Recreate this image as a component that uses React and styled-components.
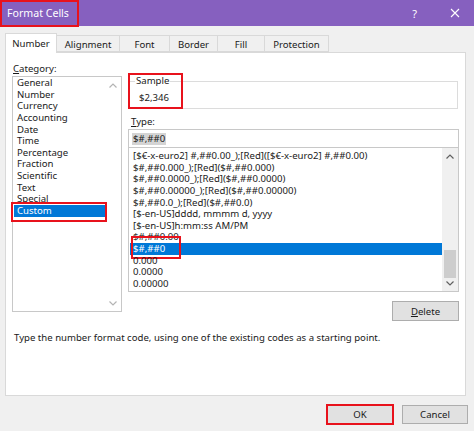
import React from 'react';
import styled, { createGlobalStyle } from 'styled-components';

const GlobalStyle = createGlobalStyle`
  html, body {
    margin: 0;
    padding: 0;
    background: #f0f0f0;
  }
  * {
    box-sizing: border-box;
  }
`;

const Window = styled.div`
  width: 474px;
  height: 431px;
  background: #f0f0f0;
  font-family: "Noto Sans", "Open Sans", sans-serif;
  font-size: 9.6px;
  color: #1a1a1a;
  display: flex;
  flex-direction: column;
  overflow: hidden;
`;

const TitleBar = styled.div`
  height: 26px;
  background: #8660bf;
  color: #fff;
  display: flex;
  align-items: center;
  justify-content: space-between;
  flex-shrink: 0;
`;

const TitleText = styled.div`
  position: relative;
  height: 26px;
  width: 79px;
  display: flex;
  align-items: center;
  padding-left: 7px;
  font-size: 10.6px;
  white-space: nowrap;
`;

const TitleButtons = styled.div`
  display: flex;
  align-items: center;
  gap: 33px;
  padding-right: 14px;
`;

const HelpGlyph = styled.span`
  font-size: 11px;
  color: #fff;
`;

// red annotation frames drawn over the screenshot
const Mark = styled.span`
  position: absolute;
  border: 2px solid #e8121c;
  pointer-events: none;
`;

const Body = styled.div`
  flex: 1;
  display: flex;
  flex-direction: column;
  padding: 7px 8px 0 5px;
`;

const Tabs = styled.div`
  display: flex;
  align-items: flex-end;
  height: 19px;
`;

const Tab = styled.div`
  width: ${p => p.$w}px;
  height: ${p => (p.$active ? 20 : 17)}px;
  display: flex;
  align-items: center;
  justify-content: center;
  background: ${p => (p.$active ? '#fff' : '#f0f0f0')};
  border: 1px solid #d9d9d9;
  border-bottom: ${p => (p.$active ? 'none' : '1px solid #d9d9d9')};
  border-left: ${p => (p.$first || p.$active ? '1px solid #d9d9d9' : 'none')};
  margin-bottom: ${p => (p.$active ? -1 : 0)}px;
  position: relative;
  z-index: ${p => (p.$active ? 2 : 1)};
  padding-top: ${p => (p.$active ? 0 : 1)}px;
`;

const Panel = styled.div`
  height: 344px;
  background: #fff;
  border: 1px solid #d9d9d9;
  padding: 9px 6px 0 6px;
  display: flex;
  flex-direction: column;
`;

const Columns = styled.div`
  display: flex;
  gap: 6px;
`;

const LeftCol = styled.div`
  width: 110px;
  display: flex;
  flex-direction: column;
`;

const RightCol = styled.div`
  flex: 1;
  display: flex;
  flex-direction: column;
`;

const Label = styled.div`
  height: 14px;
  line-height: 14px;
  padding-left: ${p => p.$indent || 0}px;
  u {
    text-decoration: underline;
    text-underline-offset: 1px;
  }
`;

const ListBox = styled.div`
  position: relative;
  height: ${p => p.$h}px;
  border: 1px solid #c8c8c8;
  background: #fff;
  display: flex;
`;

const Items = styled.div`
  flex: 1;
  padding-top: ${p => p.$pt || 0}px;
  padding-left: 1px;
`;

const Item = styled.div`
  position: relative;
  height: 11.64px;
  line-height: 11.64px;
  padding-left: ${p => p.$pl}px;
  white-space: nowrap;
  background: ${p => (p.$selected ? '#0078d7' : 'transparent')};
  color: ${p => (p.$selected ? '#fff' : '#1a1a1a')};
`;

const ScrollBar = styled.div`
  width: ${p => p.$w}px;
  background: ${p => (p.$track ? '#f0f0f0' : '#fff')};
  display: flex;
  flex-direction: column;
  align-items: center;
  justify-content: space-between;
  padding: 6px 0 5px;
`;

const Thumb = styled.div`
  width: 12px;
  height: 28px;
  background: #cdcdcd;
  margin-top: auto;
  margin-bottom: 3px;
`;

const GroupBox = styled.div`
  position: relative;
  margin-top: 19px;
  margin-right: 1px;
  height: 28px;
  border: 1px solid #dcdcdc;
  padding: 10px 0 0 10px;
  line-height: 12px;
`;

const Legend = styled.span`
  position: absolute;
  top: -7px;
  left: 6px;
  background: #fff;
  padding: 0 1px;
  line-height: 12px;
`;

const TypeLabel = styled(Label)`
  margin-top: 6px;
  padding-left: 3px;
`;

const TypeInput = styled.div`
  height: 18px;
  border: 1px solid #c8c8c8;
  border-bottom: none;
  display: flex;
  align-items: center;
  padding-left: 3px;
`;

const Selected = styled.span`
  background: #d4d4d4;
  padding: 0 1px;
  line-height: 12px;
`;

const DeleteRow = styled.div`
  display: flex;
  justify-content: flex-end;
  margin-top: 9px;
`;

const Button = styled.div`
  position: relative;
  width: ${p => p.$w || 66}px;
  height: ${p => p.$h || 20}px;
  background: #e1e1e1;
  border: 1px solid #adadad;
  display: flex;
  align-items: center;
  justify-content: center;
  u {
    text-decoration: underline;
    text-underline-offset: 1px;
  }
`;

const Hint = styled.div`
  margin-top: 10px;
  padding-left: 2px;
  color: #1a1a1a;
`;

const Footer = styled.div`
  display: flex;
  justify-content: flex-end;
  gap: 9px;
  margin-top: 9px;
  margin-right: -2px;
`;

const Chevron = ({ down, color }) => (
  <svg width="8" height="5" viewBox="0 0 8 5">
    <path
      d={down ? 'M0.5 0.5 L4 4 L7.5 0.5' : 'M0.5 4.5 L4 1 L7.5 4.5'}
      fill="none"
      stroke={color}
      strokeWidth="1.2"
    />
  </svg>
);

const CloseIcon = () => (
  <svg width="10" height="10" viewBox="0 0 10 10">
    <path d="M1 1 L9 9 M9 1 L1 9" stroke="#fff" strokeWidth="1.1" fill="none" />
  </svg>
);

const tabs = [
  { name: 'Number', w: 52 },
  { name: 'Alignment', w: 63 },
  { name: 'Font', w: 50 },
  { name: 'Border', w: 48 },
  { name: 'Fill', w: 47 },
  { name: 'Protection', w: 64 },
];

const categories = [
  'General', 'Number', 'Currency', 'Accounting', 'Date', 'Time',
  'Percentage', 'Fraction', 'Scientific', 'Text', 'Special', 'Custom',
];

const formats = [
  '[$€-x-euro2] #,##0.00_);[Red]([$€-x-euro2] #,##0.00)',
  '$#,##0.000_);[Red]($#,##0.000)',
  '$#,##0.0000_);[Red]($#,##0.0000)',
  '$#,##0.00000_);[Red]($#,##0.00000)',
  '$#,##0.0_);[Red]($#,##0.0)',
  '[$-en-US]dddd, mmmm d, yyyy',
  '[$-en-US]h:mm:ss AM/PM',
  '$#,##0.00',
  '$#,##0',
  '0.000',
  '0.0000',
  '0.00000',
];

export default function App() {
  return (
    <>
      <GlobalStyle />
      <Window>
        <TitleBar>
          <TitleText>
            Format Cells
            <Mark style={{ left: 0, top: 0, right: 0, bottom: -1 }} />
          </TitleText>
          <TitleButtons>
            <HelpGlyph>?</HelpGlyph>
            <CloseIcon />
          </TitleButtons>
        </TitleBar>

        <Body>
          <Tabs>
            {tabs.map((t, i) => (
              <Tab key={t.name} $w={t.w} $active={i === 0} $first={i === 0}>
                {t.name}
              </Tab>
            ))}
          </Tabs>

          <Panel>
            <Columns>
              <LeftCol>
                <Label $indent={1}><u>C</u>ategory:</Label>
                <ListBox $h={236}>
                  <Items>
                    {categories.map(c => (
                      <Item key={c} $pl={3} $selected={c === 'Custom'}>
                        {c}
                        {c === 'Custom' && (
                          <Mark style={{ left: -3, right: -2, top: -3, bottom: -5 }} />
                        )}
                      </Item>
                    ))}
                  </Items>
                  <ScrollBar $w={16}>
                    <Chevron color="#b4b4b4" />
                    <Chevron down color="#b4b4b4" />
                  </ScrollBar>
                </ListBox>
              </LeftCol>

              <RightCol>
                <GroupBox>
                  <Legend>Sample</Legend>
                  $2,346
                  <Mark style={{ left: -1, top: -9, width: 55, height: 36 }} />
                </GroupBox>

                <TypeLabel><u>T</u>ype:</TypeLabel>
                <TypeInput>
                  <Selected>$#,##0</Selected>
                </TypeInput>
                <ListBox $h={145}>
                  <Items $pt={2}>
                    {formats.map(f => (
                      <Item key={f} $pl={3} $selected={f === '$#,##0'}>
                        {f}
                        {f === '$#,##0' && (
                          <Mark style={{ left: 1, top: -7, width: 50, height: 23 }} />
                        )}
                      </Item>
                    ))}
                  </Items>
                  <ScrollBar $w={16} $track>
                    <Chevron color="#606060" />
                    <Thumb />
                    <Chevron down color="#606060" />
                  </ScrollBar>
                </ListBox>

                <DeleteRow>
                  <Button $w={67}><u>D</u>elete</Button>
                </DeleteRow>
              </RightCol>
            </Columns>

            <Hint>Type the number format code, using one of the existing codes as a starting point.</Hint>
          </Panel>

          <Footer>
            <Button $h={19}>
              OK
              <Mark style={{ left: -2, right: -2, top: -2, bottom: -2 }} />
            </Button>
            <Button $h={19}>Cancel</Button>
          </Footer>
        </Body>
      </Window>
    </>
  );
}
